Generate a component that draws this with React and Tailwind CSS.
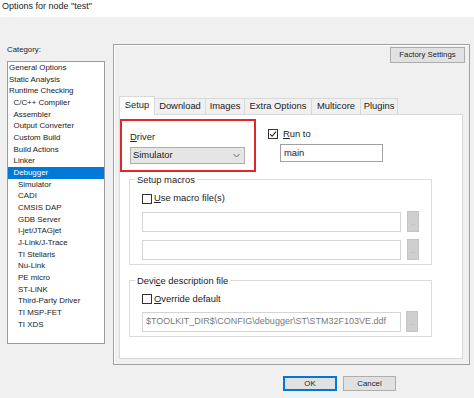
import React from 'react';

const font = { fontFamily: '"Liberation Sans", Arial, sans-serif' };

const categories = [
  ['General Options', 0],
  ['Static Analysis', 0],
  ['Runtime Checking', 0],
  ['C/C++ Compiler', 1],
  ['Assembler', 1],
  ['Output Converter', 1],
  ['Custom Build', 1],
  ['Build Actions', 1],
  ['Linker', 1],
  ['Debugger', 1],
  ['Simulator', 2],
  ['CADI', 2],
  ['CMSIS DAP', 2],
  ['GDB Server', 2],
  ['I-jet/JTAGjet', 2],
  ['J-Link/J-Trace', 2],
  ['TI Stellaris', 2],
  ['Nu-Link', 2],
  ['PE micro', 2],
  ['ST-LINK', 2],
  ['Third-Party Driver', 2],
  ['TI MSP-FET', 2],
  ['TI XDS', 2],
];

const tabs = [
  ['Setup', 'w-[36px]'],
  ['Download', 'w-[51px]'],
  ['Images', 'w-[39px]'],
  ['Extra Options', 'w-[67px]'],
  ['Multicore', 'w-[49px]'],
  ['Plugins', 'w-[37px]'],
];

function Checkbox({ checked }) {
  return (
    <span className="w-[10px] h-[10px] border border-[#333] bg-white flex items-center justify-center shrink-0">
      {checked && (
        <svg width="8" height="8" viewBox="0 0 8 8">
          <path d="M1 4.2 L3.1 6.3 L7 1.6" fill="none" stroke="#222" strokeWidth="1.1" />
        </svg>
      )}
    </span>
  );
}

function BrowseButton() {
  return (
    <div className="w-[12px] h-[21px] bg-[#cfcfcf] border border-[#c4c4c4] flex items-end justify-center pb-[5px] text-[6px] leading-[6px] text-[#9a9a9a]">
      ...
    </div>
  );
}

function Field({ children, className = '' }) {
  return (
    <div className={`w-[259px] h-[20px] border border-[#d4d4d4] bg-white flex items-center pl-[3px] ${className}`}>
      {children}
    </div>
  );
}

export default function App() {
  return (
    <div style={font} className="w-[474px] h-[398px] bg-[#f0f0f0] text-black overflow-hidden">
      <div className="h-[17px] bg-white pl-[2px] pt-[1px] text-[9px] leading-[11px] text-[#222]">
        Options for node "test"
      </div>

      <div className="flex pl-[7px] pt-[27px]">
        {/* category column */}
        <div className="w-[98px] pt-[1px]">
          <div className="text-[7.8px] leading-[10px] text-[#222]">Category:</div>
          <div className="mt-[6px] h-[283px] border border-[#9a9a9a] bg-white text-[7.9px] leading-[11.67px] text-[#1a1a1a]">
            {categories.map(([name, level]) => {
              const selected = name === 'Debugger';
              const pad = level === 0 ? 'pl-[1px]' : level === 1 ? 'pl-[5.5px]' : 'pl-[10px]';
              return (
                <div key={name} className={`${pad} whitespace-nowrap ${selected ? 'bg-[#0078d7] text-white' : ''}`}>
                  {name}
                </div>
              );
            })}
          </div>
        </div>

        {/* options panel */}
        <div className="ml-[8px] w-[357px] h-[321px] border border-[#a0a0a0] shadow-[inset_1px_1px_0_#ffffff]">
          <div className="flex justify-end pr-[4px] pt-[2px]">
            <div className="w-[75px] h-[16px] bg-[#e1e1e1] border border-[#adadad] flex items-center justify-center text-[7.8px] text-[#222]">
              Factory Settings
            </div>
          </div>

          <div className="mt-[32px] ml-[5px] flex items-end h-[19px] text-[9.4px] text-[#222]">
            {tabs.map(([name, w], i) =>
              i === 0 ? (
                <div key={name} className={`${w} h-[19px] relative top-px z-10 bg-white border-l border-t border-r border-[#d9d9d9] flex items-center justify-center pb-[2px]`}>
                  {name}
                </div>
              ) : (
                <div key={name} className={`${w} h-[16px] bg-[#f0f0f0] border-t border-r border-[#d9d9d9] flex items-center justify-center`}>
                  {name}
                </div>
              )
            )}
          </div>

          <div className="ml-[5px] w-[344px] h-[245px] border border-[#d9d9d9] bg-white text-[9.4px] text-[#222]">
            <div className="flex items-start">
              <div className="mt-[4px] w-[136px] h-[53px] border-2 border-[#e3262b] pl-[8px] pt-[9.5px]">
                <div className="leading-[11px]">
                  <span className="underline">D</span>river
                </div>
                <div className="mt-[5.5px] w-[115px] h-[17px] bg-[#e5e5e5] border border-[#adadad] flex items-center justify-between pl-[2px] pr-[4px]">
                  <span>Simulator</span>
                  <svg width="7" height="5" viewBox="0 0 7 5">
                    <path d="M0.5 1 L3.5 4 L6.5 1" fill="none" stroke="#555" strokeWidth="0.9" />
                  </svg>
                </div>
              </div>

              <div className="ml-[12px] mt-[13px]">
                <div className="flex items-center gap-[5px] h-[11px] leading-[11px]">
                  <Checkbox checked />
                  <span>
                    <span className="underline">R</span>un to
                  </span>
                </div>
                <div className="ml-[12px] mt-[5px] w-[103px] h-[18px] border border-[#a0a0a0] bg-white flex items-center pl-[3px]">
                  main
                </div>
              </div>
            </div>

            <fieldset className="ml-[9px] mt-[1.5px] w-[303px] border border-[#dcdcdc] px-[5px] pb-[4px]">
              <legend className="px-[2px] leading-[11px]">Setup macros</legend>
              <div className="pl-[7px]">
                <div className="mt-[8px] flex items-center gap-[2px] h-[12px]">
                  <Checkbox />
                  <span>
                    <span className="underline">U</span>se macro file(s)
                  </span>
                </div>
                <div className="mt-[6.5px] flex items-center gap-[6px]">
                  <Field />
                  <BrowseButton />
                </div>
                <div className="mt-[7px] flex items-center gap-[6px]">
                  <Field />
                  <BrowseButton />
                </div>
              </div>
            </fieldset>

            <fieldset className="ml-[9px] mt-[9.5px] w-[303px] border border-[#dcdcdc] px-[5px] pb-[4px]">
              <legend className="px-[2px] leading-[11px]">
                Devi<span className="underline">c</span>e description file
              </legend>
              <div className="pl-[7px]">
                <div className="mt-[7.5px] flex items-center gap-[2px] h-[12px]">
                  <Checkbox />
                  <span>
                    <span className="underline">O</span>verride default
                  </span>
                </div>
                <div className="mt-[6px] flex items-center gap-[5px]">
                  <Field className="text-[9px] text-[#7a7a7a] whitespace-nowrap overflow-hidden">
                    $TOOLKIT_DIR$\CONFIG\debugger\ST\STM32F103VE.ddf
                  </Field>
                  <BrowseButton />
                </div>
              </div>
            </fieldset>
          </div>
        </div>
      </div>

      <div className="mt-[11px] flex justify-end gap-[6px] pr-[78px] text-[7.8px] text-[#222]">
        <div className="w-[54px] h-[15px] bg-[#e1e1e1] border border-[#0078d7] shadow-[inset_0_0_0_1px_#0078d7] flex items-center justify-center">
          OK
        </div>
        <div className="w-[53px] h-[15px] bg-[#e1e1e1] border border-[#adadad] flex items-center justify-center">
          Cancel
        </div>
      </div>
    </div>
  );
}
